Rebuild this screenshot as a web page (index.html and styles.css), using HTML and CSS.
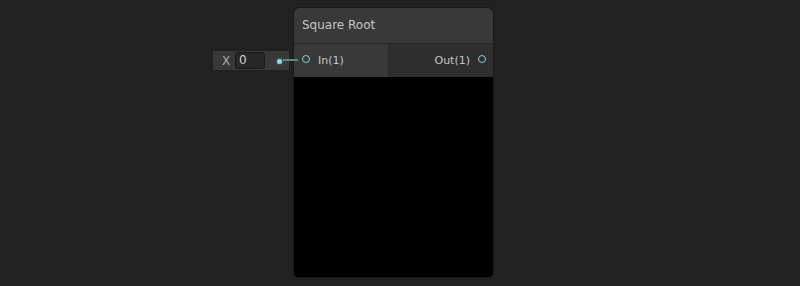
FILE: index.html
```html
<!DOCTYPE html>
<html lang="en">
<head>
  <meta charset="UTF-8">
  <title>Square Root</title>
  <link rel="stylesheet" href="styles.css">
</head>
<body>
  <div class="canvas">
    <div class="inline-input">
      <span class="axis">X</span>
      <span class="field">0</span>
      <span class="dot"></span>
    </div>
    <div class="node">
      <div class="title">Square Root</div>
      <div class="ports">
        <div class="port in">
          <span class="edge"></span>
          <span class="ring"></span>
          <span>In(1)</span>
        </div>
        <div class="port out">
          <span>Out(1)</span>
          <span class="ring"></span>
        </div>
      </div>
      <div class="preview"></div>
    </div>
  </div>
</body>
</html>
```
FILE: styles.css
```css
body { margin: 0; background: #212121; font-family: "DejaVu Sans", sans-serif; font-size: 11px; color: #c4c4c4; }
.canvas { display: flex; align-items: flex-start; padding: 7px 0 0 213px; height: 279px; }
.inline-input { display: flex; align-items: center; width: 76px; height: 19px; margin-top: 44px; background: #383838; box-sizing: border-box; padding-left: 9px; }
.axis { width: 13px; color: #a8a8a8; font-size: 12px; }
.field { width: 30px; height: 17px; box-sizing: border-box; border: 1px solid #1a1a1a; border-radius: 3px; background: #272727; padding-left: 3px; line-height: 15px; color: #d2d2d2; font-size: 12px; }
.dot { width: 5px; height: 5px; border-radius: 50%; background: #8fd9de; box-shadow: 0 0 2px #5fa8ad; margin-left: 12px; margin-top: 1px; }
.node { position: relative; width: 201px; height: 271px; margin-left: 4px; border: 1px solid #191919; border-radius: 6px 6px 5px 5px; box-sizing: border-box; background: #000; }
.title { height: 35px; background: #393939; border-radius: 5px 5px 0 0; border-bottom: 1px solid #252525; padding-left: 8px; line-height: 35px; font-size: 12px; }
.ports { display: flex; height: 33px; }
.port { display: flex; align-items: center; font-size: 11px; }
.port.in { position: relative; width: 95px; box-sizing: border-box; background: #393939; border-right: 1px solid #282828; padding-left: 8px; gap: 8px; }
.port.out { flex: 1; justify-content: flex-end; background: #2e2e2e; padding-right: 7px; gap: 8px; }
.ring { width: 6px; height: 6px; border: 1.5px solid #86d1d6; border-radius: 50%; margin-top: -3px; }
.edge { position: absolute; left: -11px; top: 15px; width: 15px; height: 2px; background: #4f8a8d; }
.preview { height: 200px; background: #000; border-radius: 0 0 5px 5px; }
```
